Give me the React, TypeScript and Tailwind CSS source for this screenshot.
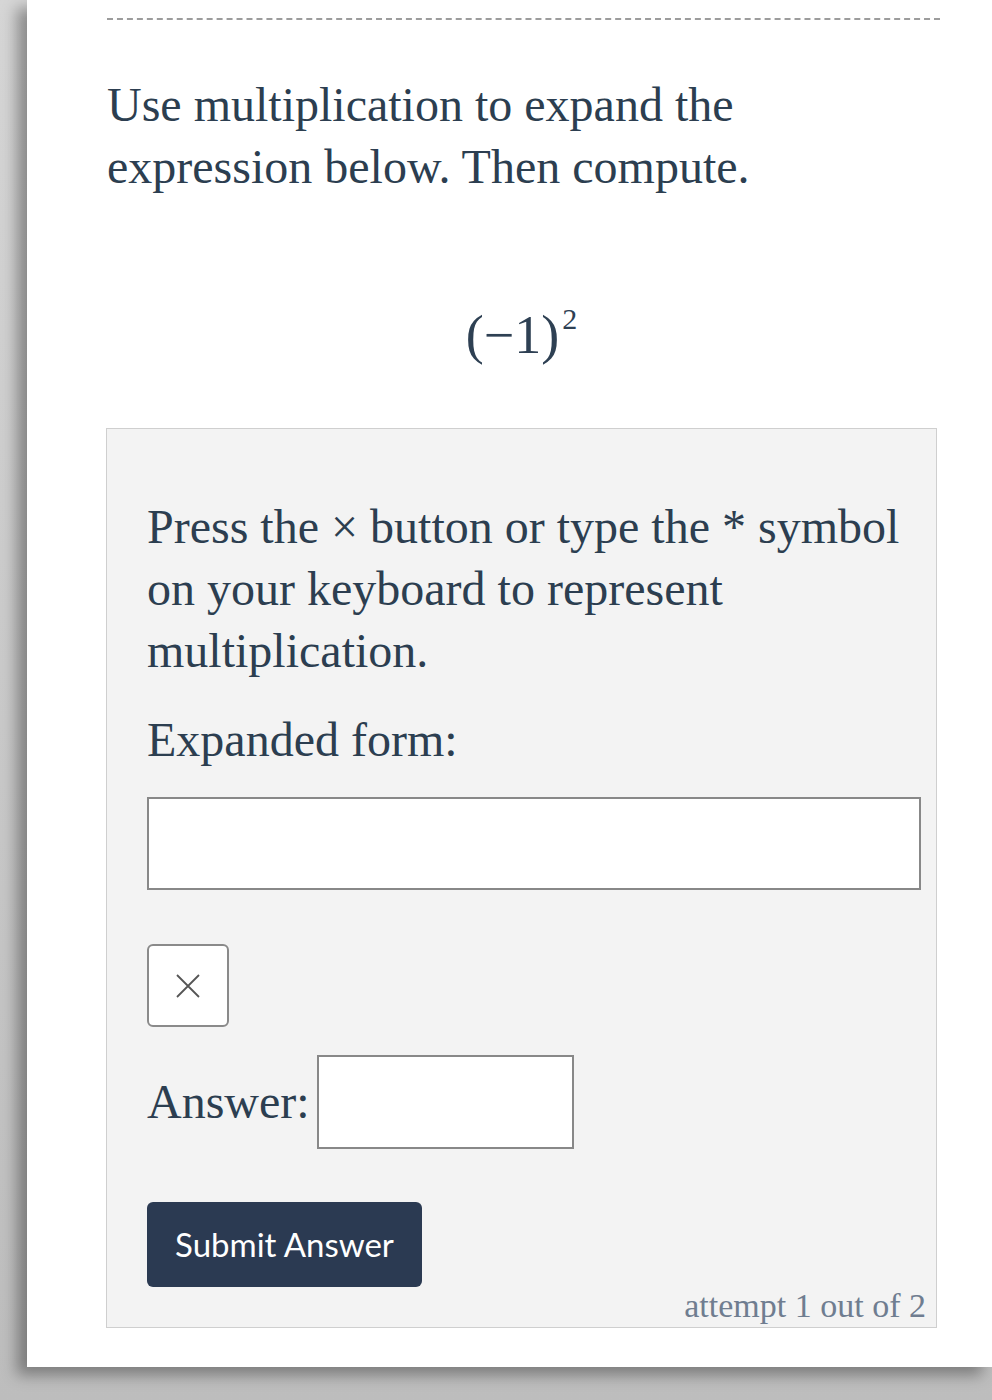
import React from 'react';

const serif = { fontFamily: '"Liberation Serif", "Times New Roman", serif' };

export default function App() {
  return (
    <div className="h-[1400px] w-full overflow-hidden bg-gradient-to-b from-[#d6d6d6] to-[#bdbdbd]">
      <div className="ml-[27px] h-[1367px] bg-white pt-[18px] shadow-[-10px_8px_14px_rgba(0,0,0,0.35)]" style={serif}>
        <div className="ml-[80px] w-[833px] border-t-2 border-dashed border-[#9c9c9c]" />

        <div className="ml-[79px] w-[831px] text-[#2c3e50]">
          <h1 className="ml-[1px] mt-[54px] text-[48px] leading-[62px] font-normal">
            Use multiplication to expand the expression below. Then compute.
          </h1>

          <div className="mt-[106px] text-center text-[54px] leading-[62px] text-[#2e4053]">
            (&minus;1)<sup className="relative -top-[24px] ml-[3px] text-[30px]">2</sup>
          </div>

          <div className="mt-[62px] border border-[#cfcfcf] bg-[#f3f3f3] pb-[3px] pl-[40px] pr-[10px] pt-[67px]">
            <p className="text-[48px] leading-[62px]">
              Press the &times; button or type the * symbol on your keyboard to represent multiplication.
            </p>

            <p className="mt-[27px] text-[48px] leading-[62px]">Expanded form:</p>

            <input
              type="text"
              className="mt-[26px] block h-[93px] w-[774px] border-2 border-[#888] bg-white outline-none"
            />

            <button className="mt-[54px] flex h-[83px] w-[82px] items-center justify-center rounded-md border-2 border-[#8a8a8a] bg-white">
              <svg width="26" height="26" viewBox="0 0 26 26" fill="none" stroke="#555" strokeWidth="1.8">
                <path d="M2 2 L24 24 M24 2 L2 24" />
              </svg>
            </button>

            <div className="mt-[28px] flex items-center">
              <span className="text-[48px] leading-[62px]">Answer:</span>
              <input
                type="text"
                className="ml-[7px] block h-[94px] w-[257px] border-2 border-[#888] bg-white outline-none"
              />
            </div>

            <button
              className="mt-[53px] h-[85px] w-[275px] rounded-md bg-[#2b3a52] text-[33px] text-white"
              style={{ fontFamily: 'Lato, "Open Sans", sans-serif' }}
            >
              Submit Answer
            </button>

            <p className="mt-[1px] text-right text-[34px] leading-[36px] text-[#6f7d90]">attempt 1 out of 2</p>
          </div>
        </div>
      </div>
    </div>
  );
}
